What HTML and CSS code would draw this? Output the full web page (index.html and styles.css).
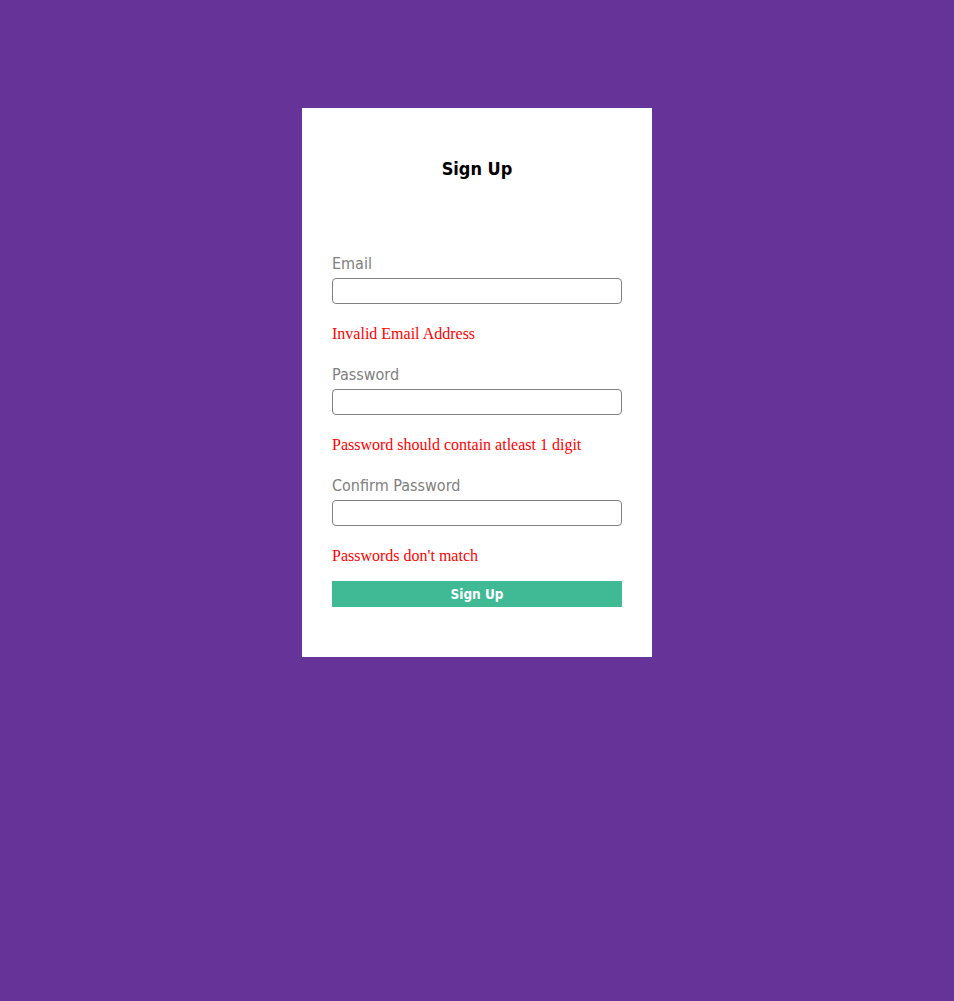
FILE: index.html
```html
<!DOCTYPE html>
<html>
<head>
<meta charset="utf-8">
<link rel="stylesheet" href="styles.css">
</head>
<body>
<div class="page">
  <form class="card">
    <h2 class="title">Sign Up</h2>
    <div class="field">
      <label class="label">Email</label>
      <input class="input" type="text">
      <p class="error">Invalid Email Address</p>
    </div>
    <div class="field">
      <label class="label">Password</label>
      <input class="input" type="password">
      <p class="error">Password should contain atleast 1 digit</p>
    </div>
    <div class="field">
      <label class="label">Confirm Password</label>
      <input class="input" type="password">
      <p class="error">Passwords don't match</p>
    </div>
    <button class="btn" type="button">Sign Up</button>
  </form>
</div>
</body>
</html>
```
FILE: styles.css
```css
html, body {
  margin: 0;
  padding: 0;
  background: #663399;
  height: 100%;
}
.page {
  display: flex;
  justify-content: center;
  padding-top: 108px;
}
.card {
  width: 350px;
  box-sizing: border-box;
  background: #fff;
  padding: 50px 30px 50px;
  display: flex;
  flex-direction: column;
  font-family: "DejaVu Sans Condensed", "DejaVu Sans", sans-serif;
}
.title {
  margin: 0 0 74px;
  text-align: center;
  font-size: 18px;
  line-height: 22px;
  font-weight: bold;
  color: #000;
}
.field {
  display: flex;
  flex-direction: column;
}
.label {
  font-size: 16px;
  line-height: 19px;
  color: #808080;
  margin-bottom: 5px;
}
.input {
  height: 26px;
  box-sizing: border-box;
  border: 1px solid #808080;
  border-radius: 4px;
  margin: 0;
  padding: 0 4px;
  background: #fff;
}
.error {
  margin: 21px 0 22px;
  font-family: "Liberation Serif", serif;
  font-size: 16px;
  line-height: 18px;
  color: #ff0000;
}
.field:last-of-type .error {
  margin-bottom: 16px;
}
.btn {
  height: 26px;
  border: none;
  margin: 0;
  padding: 0;
  background: #40ba94;
  color: #fff;
  font-family: "DejaVu Sans Condensed", "DejaVu Sans", sans-serif;
  font-weight: bold;
  font-size: 13.5px;
}
```
